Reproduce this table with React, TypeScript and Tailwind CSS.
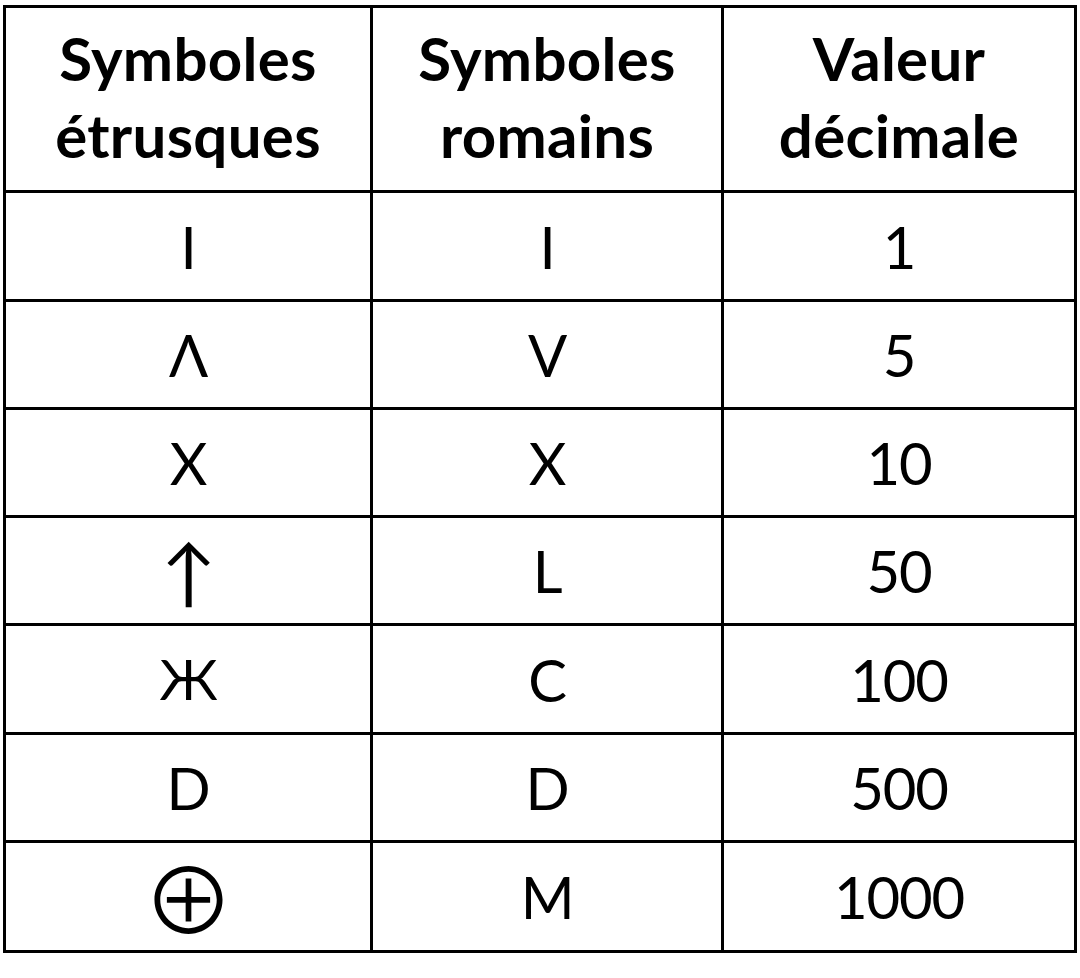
import React from "react";

type Cell = { t: string; cls?: string };

const rows: Cell[][] = [
  [{ t: "I" }, { t: "I" }, { t: "1" }],
  [{ t: "Λ" }, { t: "V" }, { t: "5" }],
  [{ t: "X" }, { t: "X" }, { t: "10" }],
  [{ t: "↑", cls: "text-[74px] leading-none" }, { t: "L" }, { t: "50" }],
  [{ t: "Ж", cls: "text-[56px]" }, { t: "C" }, { t: "100" }],
  [{ t: "D" }, { t: "D" }, { t: "500" }],
  [
    { t: "⊕", cls: "text-[92px] leading-none font-[350] pb-[4px] [font-family:'Noto_Sans_CJK_JP','DejaVu_Sans',sans-serif]" },
    { t: "M" },
    { t: "1000" },
  ],
];

const rowH = ["h-[109px]", "h-[108px]", "h-[108px]", "h-[108px]", "h-[109px]", "h-[108px]", "h-[110px]"];

export default function App() {
  return (
    <div
      className="w-[1080px] h-[978px] bg-white text-black overflow-hidden pt-[5px] pl-[3px]"
      style={{ fontFamily: 'Lato, "Noto Sans", "DejaVu Sans", sans-serif' }}
    >
      <div className="w-[1074px] border-l-[3px] border-t-[3px] border-black grid grid-cols-[367px_351px_353px]">
        {["Symboles|étrusques", "Symboles|romains", "Valeur|décimale"].map((h, i) => (
          <div
            key={i}
            className="h-[185px] border-r-[3px] border-b-[3px] border-black flex flex-col items-center justify-center font-bold text-[60px] leading-[77px] tracking-[0.005em] pb-[4px]"
          >
            {h.split("|").map((l, j) => (
              <span key={j}>{l}</span>
            ))}
          </div>
        ))}
        {rows.map((r, ri) =>
          r.map((c, ci) => (
            <div
              key={ri + "-" + ci}
              className={`${rowH[ri]} border-r-[3px] border-b-[3px] border-black flex items-center justify-center text-[58px] tracking-[-0.02em]`}
            >
              <span className={c.cls ?? ""}>{c.t}</span>
            </div>
          ))
        )}
      </div>
    </div>
  );
}
